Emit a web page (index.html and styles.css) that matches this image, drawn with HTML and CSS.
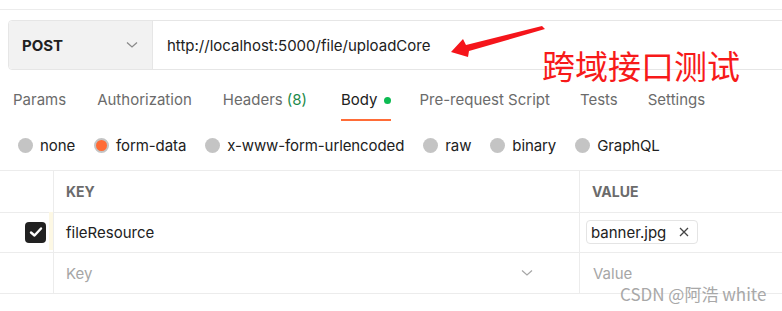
FILE: index.html
```html
<!DOCTYPE html>
<html lang="en">
<head>
    <meta charset="UTF-8">
    <title>POST uploadCore</title>
    <link rel="stylesheet" href="styles.css">
</head>
<body>
    <div class="page">
        <div class="topline"></div>

        <div class="urlbar">
            <div class="method">
                <span>POST</span>
                <svg class="chev" width="12" height="8" viewBox="0 0 12 8"><path d="M1 1.5 L6 6 L11 1.5" fill="none" stroke="#8a8a8a" stroke-width="1.3"/></svg>
            </div>
            <div class="url">http://localhost:5000/file/uploadCore</div>
        </div>

        <div class="tabs">
            <span class="tab">Params</span>
            <span class="tab">Authorization</span>
            <span class="tab">Headers <span class="count">(8)</span></span>
            <span class="tab active">Body <i class="dot"></i></span>
            <span class="tab">Pre-request Script</span>
            <span class="tab">Tests</span>
            <span class="tab">Settings</span>
        </div>

        <div class="modes">
            <label class="mode"><i class="radio"></i>none</label>
            <label class="mode"><i class="radio on"></i>form-data</label>
            <label class="mode"><i class="radio"></i>x-www-form-urlencoded</label>
            <label class="mode"><i class="radio"></i>raw</label>
            <label class="mode"><i class="radio"></i>binary</label>
            <label class="mode"><i class="radio"></i>GraphQL</label>
        </div>

        <div class="table">
            <div class="cell first"></div>
            <div class="cell head">KEY</div>
            <div class="cell head last">VALUE</div>

            <div class="cell first">
                <span class="check">
                    <svg width="14" height="12" viewBox="0 0 14 12"><path d="M2 6.5 L5.5 9.5 L12 2.5" fill="none" stroke="#fff" stroke-width="2.4" stroke-linecap="round" stroke-linejoin="round"/></svg>
                </span>
                <span class="handle"></span>
            </div>
            <div class="cell">fileResource</div>
            <div class="cell last">
                <span class="chip">banner.jpg
                    <svg width="10" height="10" viewBox="0 0 10 10"><path d="M1 1 L9 9 M9 1 L1 9" stroke="#444" stroke-width="1.3"/></svg>
                </span>
            </div>

            <div class="cell first"></div>
            <div class="cell placeholder split">
                Key
                <svg width="12" height="8" viewBox="0 0 12 8"><path d="M1 1.5 L6 6 L11 1.5" fill="none" stroke="#a6a6a6" stroke-width="1.2"/></svg>
            </div>
            <div class="cell placeholder last">Value</div>
        </div>

        <svg class="arrow" width="782" height="90" viewBox="0 0 782 90">
            <polygon points="451,52 463,39 466,45 542,26 545,29 469,51 468,57" fill="#f5151b"/>
        </svg>
        <div class="note">跨域接口测试</div>
        <div class="mark">CSDN @阿浩 white</div>
    </div>
</body>
</html>
```

FILE: styles.css
```css
* {
    box-sizing: border-box;
    margin: 0;
    padding: 0;
}

body {
    font-family: Inter, "Noto Sans", sans-serif;
    font-size: 15px;
    color: #212121;
    background: #fff;
    overflow: hidden;
}

.page {
    position: relative;
    width: 782px;
    height: 311px;
}

.topline {
    height: 10px;
    border-bottom: 1px solid #ececec;
}

.urlbar {
    display: flex;
    height: 50px;
    margin: 10px -20px 0 8px;
    border: 1px solid #e6e6e6;
    border-radius: 4px;
}

.method {
    width: 144px;
    display: flex;
    align-items: center;
    justify-content: space-between;
    padding: 0 14px 0 13px;
    background: #f2f2f2;
    border-right: 1px solid #e6e6e6;
    border-radius: 4px 0 0 4px;
    font-weight: 700;
}

.url {
    display: flex;
    align-items: center;
    padding-left: 14px;
}

.tabs {
    display: flex;
    gap: 31px;
    padding: 20px 0 0 13px;
    height: 51px;
    color: #6b6b6b;
}

.tab {
    position: relative;
    height: 31px;
    display: flex;
    align-items: flex-start;
    gap: 4px;
}

.tab:nth-child(3) {
    margin-right: 3px;
}

.tab:nth-child(5) {
    margin-right: -1px;
}

.tab:nth-child(6) {
    margin-right: -1px;
}

.tab.active {
    color: #212121;
    margin-right: -3px;
}

.tab.active::after {
    content: "";
    position: absolute;
    left: 0;
    right: 0;
    bottom: 0;
    height: 2px;
    background: #ff6c37;
}

.count {
    color: #1d8a4b;
}

.dot {
    width: 7px;
    height: 7px;
    margin: 7px 0 0 3px;
    border-radius: 50%;
    background: #0cbb52;
}

.modes {
    display: flex;
    gap: 19px;
    padding: 14px 0 0 18px;
    height: 49px;
    letter-spacing: -0.1px;
}

.mode {
    display: flex;
    align-items: center;
    gap: 7px;
    height: 21px;
}

.radio {
    width: 15px;
    height: 15px;
    border-radius: 50%;
    background: #c4c4c4;
}

.radio.on {
    background: #ff6c37;
    border: 2px solid #c4c4c4;
}

.table {
    display: grid;
    grid-template-columns: 53px 526px 1fr;
    grid-auto-rows: 41px;
    border-top: 1px solid #ececec;
}

.table .cell:nth-child(-n+3) {
    height: 42px;
}

.cell {
    display: flex;
    align-items: center;
    padding-left: 12px;
    border-bottom: 1px solid #ececec;
    border-left: 1px solid #ececec;
}

.cell.first {
    border-left: none;
    justify-content: flex-end;
    padding: 0;
    gap: 2px;
}

.cell.last {
    padding-left: 6px;
}

.head {
    font-weight: 700;
    color: #6b6b6b;
    font-size: 14px;
}

.head.last {
    padding-left: 12px;
}

.check {
    width: 21px;
    height: 21px;
    border-radius: 4px;
    background: #212121;
    display: flex;
    align-items: center;
    justify-content: center;
    margin-right: 1px;
}

.handle {
    width: 4px;
    height: 38px;
    align-self: flex-start;
    background: #fdf8e4;
}

.chip {
    display: flex;
    align-items: center;
    gap: 13px;
    height: 24px;
    padding: 0 8px 0 4px;
    border: 1px solid #e4e4e4;
    border-radius: 4px;
}

.placeholder {
    color: #a6a6a6;
}

.split {
    justify-content: space-between;
    padding-right: 46px;
}

.placeholder.last {
    padding-left: 13px;
}

.arrow {
    position: absolute;
    left: 0;
    top: 0;
}

.note {
    position: absolute;
    left: 542px;
    top: 43px;
    font-family: "Noto Sans CJK SC", sans-serif;
    font-size: 33px;
    line-height: 44px;
    color: #f71a1a;
}

.mark {
    position: absolute;
    left: 620px;
    top: 281px;
    font-family: "Noto Sans CJK SC", sans-serif;
    font-size: 17px;
    color: #a8a8a8;
}
```
